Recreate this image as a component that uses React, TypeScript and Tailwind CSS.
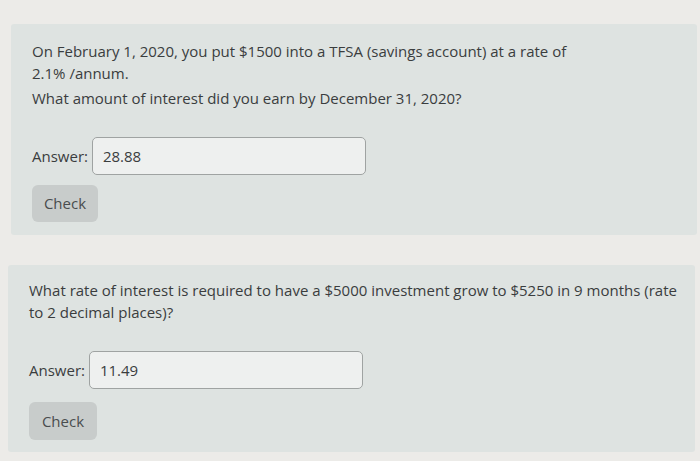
export default function App() {
  return (
    <div
      className="min-h-[461px] w-[700px] bg-[#ecebe8] pt-[24px] text-[#3a3d3e]"
      style={{ fontFamily: '"Open Sans", "Noto Sans", sans-serif' }}
    >
      <div className="ml-[11px] mr-[3px] h-[211px] rounded-[3px] bg-[#dee3e1] px-[21px] pt-[16px]">
        <p className="text-[15px] leading-[22px]">
          On February 1, 2020, you put $1500 into a TFSA (savings account) at a rate of
          <br />
          2.1% /annum.
        </p>
        <p className="mt-[3px] text-[15px] leading-[22px]">What amount of interest did you earn by December 31, 2020?</p>
        <AnswerRow value="28.88" top="mt-[28px]" />
        <button className="mt-[10px] h-[37px] w-[66px] rounded-[6px] bg-[#c8cccb] text-[15px] text-[#4a4d4e]">
          Check
        </button>
      </div>

      <div className="ml-[8px] mr-[5px] mt-[30px] h-[187px] rounded-[3px] bg-[#dee3e1] pl-[21px] pr-[10px] pt-[14px]">
        <p className="text-[15px] leading-[22px]">
          What rate of interest is required to have a $5000 investment grow to $5250 in 9 months (rate to 2 decimal places)?
        </p>
        <AnswerRow value="11.49" top="mt-[28px]" />
        <button className="mt-[13px] h-[38px] w-[68px] rounded-[6px] bg-[#c8cccb] text-[15px] text-[#4a4d4e]">
          Check
        </button>
      </div>
    </div>
  );
}

function AnswerRow({ value, top }: { value: string; top: string }) {
  return (
    <div className={`${top} flex items-center gap-[4px]`}>
      <span className="text-[15px]">Answer:</span>
      <div className="flex h-[38px] w-[274px] items-center rounded-[5px] border border-[#9fa3a2] bg-[#eef0ef] px-[10px] text-[15px]">
        {value}
      </div>
    </div>
  );
}
